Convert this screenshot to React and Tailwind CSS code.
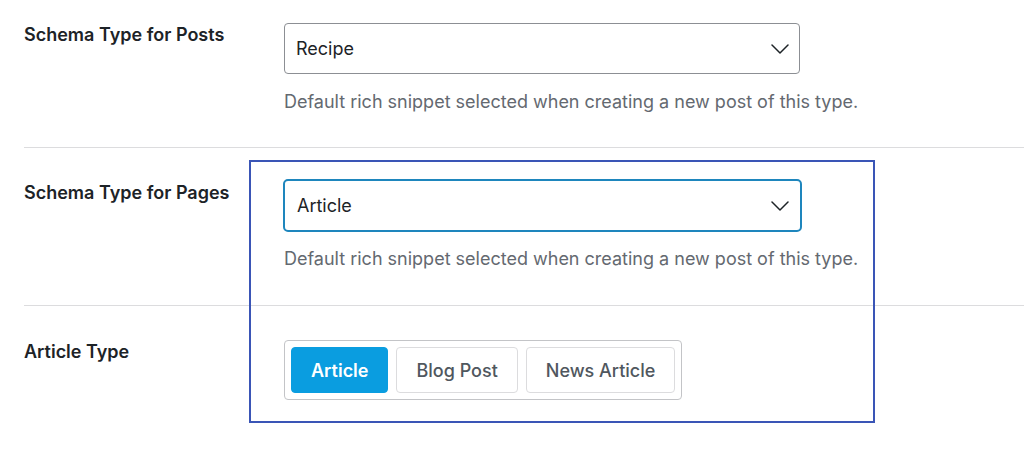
import React from 'react';

const font = { fontFamily: 'Inter, "Liberation Sans", sans-serif' };

function Chevron() {
  return (
    <svg width="18" height="10" viewBox="0 0 18 10" fill="none" className="shrink-0">
      <path d="M1 1l8 8 8-8" stroke="#1d2327" strokeWidth="1.5" strokeLinecap="round" strokeLinejoin="round" />
    </svg>
  );
}

function Select({ value, focused }) {
  return (
    <div
      className={
        focused
          ? 'flex h-[53px] w-[519px] items-center justify-between rounded-[5px] border-2 border-[#1e86bd] bg-white pl-[12px] pr-[11px] -ml-px'
          : 'flex h-[51px] w-[516px] items-center justify-between rounded-[4px] border border-[#8c8f94] bg-white pl-[11px] pr-[10px]'
      }
    >
      <span className="text-[18px] text-[#1d2327]">{value}</span>
      <Chevron />
    </div>
  );
}

const help = 'Default rich snippet selected when creating a new post of this type.';

export default function App() {
  const [articleType, setArticleType] = React.useState('Article');

  return (
    <div className="relative h-[452px] w-[1024px] overflow-hidden bg-white" style={font}>
      <div className="ml-6">
        <div className="flex border-b border-[#dcdcde] pt-[23px] pb-[33px]">
          <div className="w-[260px] text-[18px] leading-[24px] font-semibold text-[#1d2327]">Schema Type for Posts</div>
          <div>
            <Select value="Recipe" />
            <p className="mt-[16px] text-[18px] leading-[24px] text-[#646970]">{help}</p>
          </div>
        </div>

        <div className="flex border-b border-[#dcdcde] pt-[31px] pb-[34px]">
          <div className="w-[260px] pt-[2px] text-[18px] leading-[24px] font-semibold text-[#1d2327]">Schema Type for Pages</div>
          <div>
            <Select value="Article" focused />
            <p className="mt-[15px] text-[18px] leading-[24px] text-[#646970]">{help}</p>
          </div>
        </div>

        <div className="flex pt-[34px]">
          <div className="w-[260px] text-[18px] leading-[24px] font-semibold text-[#1d2327]">Article Type</div>
          <div className="flex gap-[8px] rounded-[4px] border border-[#c3c4c7] p-[6px]">
            {['Article', 'Blog Post', 'News Article'].map((t) => (
              <button
                key={t}
                onClick={() => setArticleType(t)}
                className={
                  articleType === t
                    ? 'h-[46px] rounded-[4px] border border-[#0a9de0] bg-[#0a9de0] px-[19px] text-[18px] font-semibold text-white'
                    : 'h-[46px] rounded-[4px] border border-[#dcdcde] bg-white px-[19px] text-[18px] font-medium text-[#50575e]'
                }
              >
                {t}
              </button>
            ))}
          </div>
        </div>
      </div>

      <div className="pointer-events-none absolute left-[249px] top-[160px] h-[263px] w-[626px] border-2 border-[#3a55b6]" />
    </div>
  );
}
